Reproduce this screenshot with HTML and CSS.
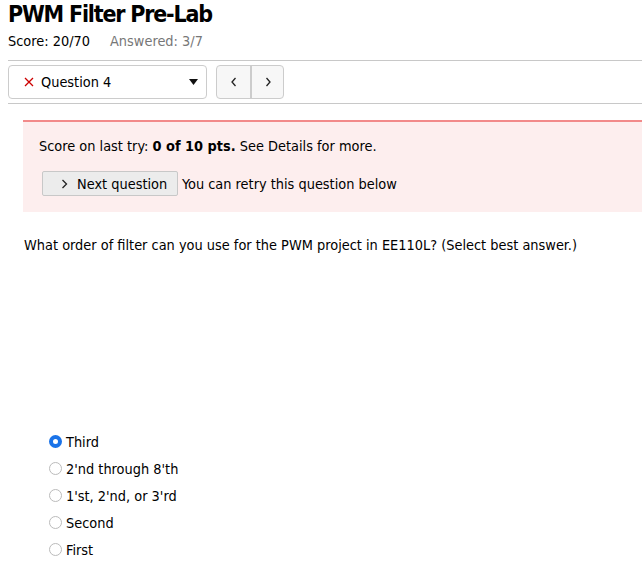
FILE: index.html
```html
<!DOCTYPE html>
<html>
<head>
<meta charset="utf-8">
<link rel="stylesheet" href="styles.css">
</head>
<body>
<h1 class="title">PWM Filter Pre-Lab</h1>
<div class="scoreline"><span class="score">Score: 20/70</span><span class="answered">Answered: 3/7</span></div>
<div class="navbar">
  <div class="qselect">
    <svg class="xmark" width="10" height="10" viewBox="0 0 10 10"><path d="M1 1L9 9M9 1L1 9" stroke="#c00" stroke-width="1.3" fill="none"/></svg><span class="qlabel">Question 4</span>
    <svg class="caret" width="9" height="6" viewBox="0 0 9 6"><path d="M0 0H9L4.5 6Z" fill="#111"/></svg>
  </div>
  <div class="pager">
    <button class="pbtn"><svg width="8" height="12" viewBox="0 0 8 12"><path d="M5.5 2L2 6L5.5 10" fill="none" stroke="#222" stroke-width="1.3"/></svg></button>
    <button class="pbtn"><svg width="8" height="12" viewBox="0 0 8 12"><path d="M2.5 2L6 6L2.5 10" fill="none" stroke="#222" stroke-width="1.3"/></svg></button>
  </div>
</div>
<div class="alert">
  <p class="lasttry">Score on last try: <b>0 of 10 pts.</b> See Details for more.</p>
  <div class="nextrow">
    <button class="nextbtn"><svg width="7" height="10" viewBox="0 0 7 10"><path d="M1.5 1L5.5 5L1.5 9" fill="none" stroke="#222" stroke-width="1.3"/></svg><span>Next question</span></button>
    <span class="retry">You can retry this question below</span>
  </div>
</div>
<p class="question">What order of filter can you use for the PWM project in EE110L? (Select best answer.)</p>
<ul class="choices">
  <li class="choice"><span class="radio checked"></span>Third</li>
  <li class="choice"><span class="radio"></span>2'nd through 8'th</li>
  <li class="choice"><span class="radio"></span>1'st, 2'nd, or 3'rd</li>
  <li class="choice"><span class="radio"></span>Second</li>
  <li class="choice"><span class="radio"></span>First</li>
</ul>
</body>
</html>
```
FILE: styles.css
```css
html, body { background: #fff; }
body {
  margin: 0 0 0 8px;
  font-family: "DejaVu Sans Condensed", "DejaVu Sans", sans-serif;
  font-stretch: condensed;
  font-size: 14.4px;
  color: #000;
}
.title {
  margin: 0;
  padding-top: 1px;
  font-size: 23px;
  letter-spacing: -1.2px;
  font-weight: bold;
  line-height: 27px;
}
.scoreline {
  margin-top: 4px;
  line-height: 18px;
  padding-bottom: 10px;
  border-bottom: 1px solid #c8c8c8;
}
.answered { color: #777; margin-left: 20px; }
.navbar {
  display: flex;
  gap: 9px;
  padding: 4px 0 4px 0;
  border-bottom: 1px solid #c8c8c8;
}
.qselect {
  width: 199px;
  height: 34px;
  box-sizing: border-box;
  border: 1px solid #ccc;
  border-radius: 4px;
  display: flex;
  align-items: center;
  padding-left: 15px;
  padding-right: 8px;
}
.xmark { display: block; margin-right: 7px; }
.qlabel { flex: 1; }
.caret { display: block; }
.pager {
  display: flex;
  height: 34px;
  box-sizing: border-box;
  border: 1px solid #ccc;
  border-radius: 4px;
  background: #f7f7f7;
  overflow: hidden;
}
.pbtn {
  width: 33px;
  border: 0;
  background: transparent;
  padding: 0;
  display: flex;
  align-items: center;
  justify-content: center;
}
.pbtn + .pbtn { border-left: 2px solid #ccc; }
.alert {
  margin: 16px 0 0 15px;
  background: #fdeeee;
  border-top: 2px solid #f28a8a;
  padding: 15px 16px 16px 16px;
  height: 92px;
  box-sizing: border-box;
}
.lasttry { margin: 0; line-height: 18px; }
.nextrow {
  display: flex;
  align-items: center;
  margin-top: 16px;
  padding-left: 3px;
}
.nextbtn {
  height: 25px;
  width: 136px;
  box-sizing: border-box;
  border: 1px solid #c8c8c8;
  border-radius: 2px;
  background: #ececec;
  font: inherit;
  color: #000;
  display: flex;
  align-items: center;
  gap: 9px;
  padding: 0 0 0 18px;
}
.retry { margin-left: 4px; }
.question {
  margin: 24px 0 0 16px;
  line-height: 18px;
}
.choices {
  list-style: none;
  margin: 174px 0 0 41px;
  padding: 0;
}
.choice {
  display: flex;
  align-items: center;
  height: 27px;
  line-height: 18px;
}
.radio {
  width: 13px;
  height: 13px;
  box-sizing: border-box;
  border: 1px solid #bbb;
  border-radius: 50%;
  margin-right: 4px;
  background: #fff;
}
.radio.checked {
  border: 4px solid #1a73e8;
  background: #fff;
}
```
